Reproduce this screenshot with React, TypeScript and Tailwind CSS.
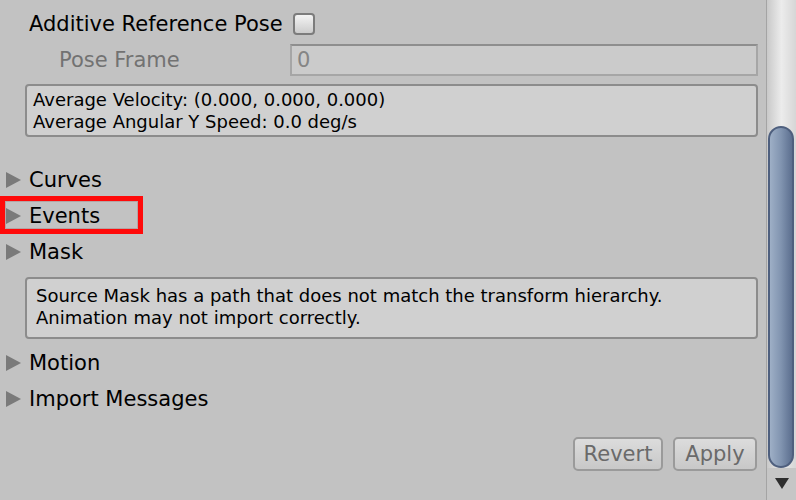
function Arrow() {
  return (
    <svg width="16" height="16" viewBox="0 0 16 16" className="shrink-0">
      <polygon points="0,0 15,8 0,16" fill="#7a7a7a" />
    </svg>
  );
}

function Foldout({ label, highlight }: { label: string; highlight?: boolean }) {
  return (
    <div className="relative flex h-[36px] items-center gap-[7px] pl-[6px]">
      <Arrow />
      <span className="text-[21px] leading-none text-black">{label}</span>
      {highlight ? (
        <div className="absolute left-0 top-[-2px] h-[38px] w-[143px] border-[5px] border-[#ff0a0a]">
          <div className="h-full w-full border border-[#b4a4a4]" />
        </div>
      ) : null}
    </div>
  );
}

function HelpBox({ lines, className }: { lines: string[]; className?: string }) {
  return (
    <div
      className={
        "ml-[25px] mr-[8px] rounded-[4px] border-2 border-[#8c8c8c] bg-[#d0d0d0] text-[18px] leading-[22px] text-black " +
        (className ?? "")
      }
    >
      {lines.map((line) => (
        <div key={line}>{line}</div>
      ))}
    </div>
  );
}

function Button({ label, width }: { label: string; width: string }) {
  return (
    <div
      className={
        "flex h-[34px] items-center justify-center rounded-[5px] border-2 border-[#9a9a9a] bg-gradient-to-b from-[#dcdcdc] to-[#c8c8c8] text-[21px] leading-none text-[#6a6a6a] " +
        width
      }
    >
      {label}
    </div>
  );
}

export default function App() {
  return (
    <div className="flex h-[500px] w-[796px] overflow-hidden bg-[#c2c2c2] font-['DejaVu_Sans',sans-serif]">
      <div className="flex w-[766px] flex-col pt-[6px]">
        <div className="flex h-[36px] items-center pl-[29px]">
          <span className="text-[21px] leading-none text-black">Additive Reference Pose</span>
          <div className="ml-[10px] h-[22px] w-[22px] rounded-[4px] border-2 border-[#7c7c7c] bg-gradient-to-b from-[#f4f4f4] to-[#cccccc]" />
        </div>

        <div className="mt-[2px] flex h-[32px] items-center pr-[8px]">
          <span className="w-[290px] pl-[59px] text-[21px] leading-none text-[#727272]">Pose Frame</span>
          <div className="flex h-[32px] flex-1 items-center border-2 border-[#a6a6a6] border-t-[#8e8e8e] bg-[#cbcbcb] pl-[5px] text-[21px] leading-none text-[#858585]">
            0
          </div>
        </div>

        <HelpBox
          className="mt-[8px] h-[53px] pl-[6px] pt-[3px]"
          lines={["Average Velocity: (0.000, 0.000, 0.000)", "Average Angular Y Speed: 0.0 deg/s"]}
        />

        <div className="mt-[25px]">
          <Foldout label="Curves" />
          <Foldout label="Events" highlight />
          <Foldout label="Mask" />
        </div>

        <HelpBox
          className="mt-[7px] h-[62px] pl-[9px] pt-[6px]"
          lines={[
            "Source Mask has a path that does not match the transform hierarchy.",
            "Animation may not import correctly.",
          ]}
        />

        <div className="mt-[6px]">
          <Foldout label="Motion" />
          <Foldout label="Import Messages" />
        </div>

        <div className="mt-[20px] flex justify-end gap-[10px] pr-[9px]">
          <Button label="Revert" width="w-[90px]" />
          <Button label="Apply" width="w-[84px]" />
        </div>
      </div>

      <div className="relative flex w-[30px] flex-col border-l border-[#a4a4a4] bg-gradient-to-r from-[#c9c9c9] via-[#ececec] to-[#d6d6d6]">
        <div className="h-[126px]" />
        <div className="ml-[1px] h-[342px] w-[26px] rounded-full border-2 border-[#4e5f7e] bg-gradient-to-r from-[#9eafc6] via-[#8194b0] to-[#5c6f8f]" />
        <div className="flex flex-1 items-center justify-center bg-[#c6c6c6]">
          <svg width="14" height="12" viewBox="0 0 14 12">
            <polygon points="0,0 14,0 7,11" fill="#2e2e2e" />
          </svg>
        </div>
      </div>
    </div>
  );
}
